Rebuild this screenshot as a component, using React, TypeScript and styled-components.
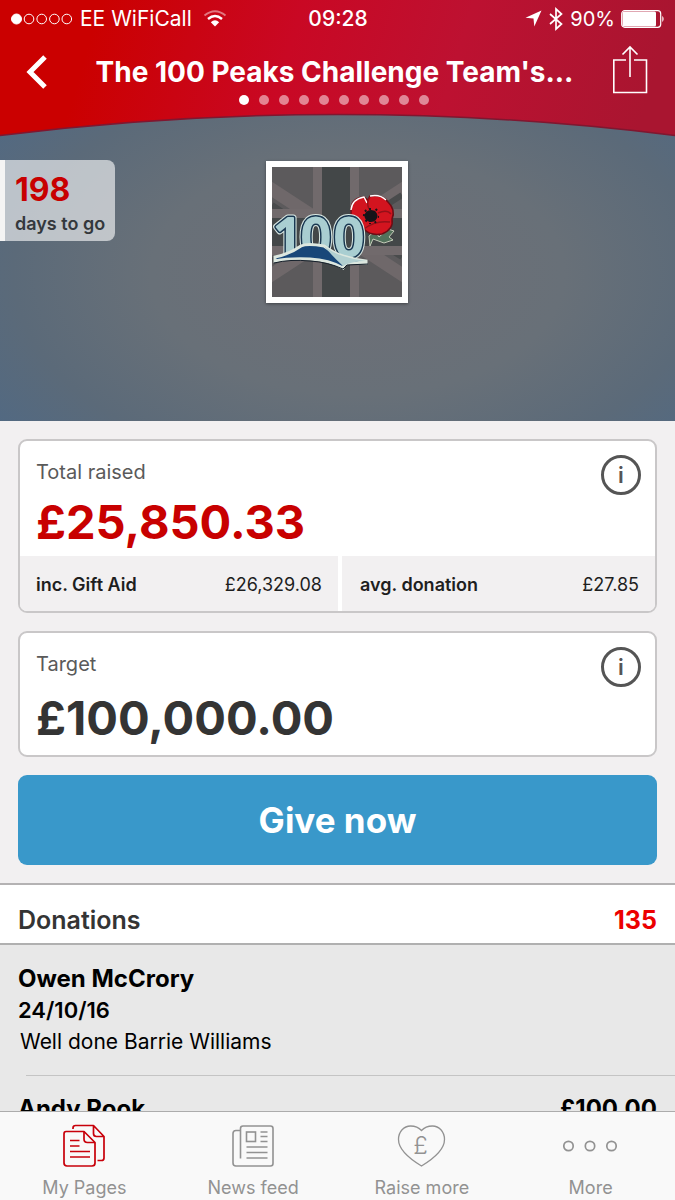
import React from "react";
import styled, { createGlobalStyle } from "styled-components";

const GlobalStyle = createGlobalStyle`
  *, *::before, *::after { box-sizing: border-box; }
  body {
    margin: 0;
    background: #f2f0f1;
    font-family: Inter, "Open Sans", sans-serif;
    color: #1e1e1e;
  }
  button { font-family: inherit; cursor: pointer; padding: 0; border: 0; background: none; color: inherit; }
  h1, h2, h3, p, ul, dl, dd { margin: 0; padding: 0; }
  svg { display: block; flex: none; }
`;

const Screen = styled.div`
  height: 100vh;
  display: flex;
  flex-direction: column;
  overflow: hidden;
`;

const Header = styled.header`
  position: relative;
  z-index: 1;
  flex: none;
  height: 114px;
  color: #fff;
`;

const HeaderShape = styled.svg`
  position: absolute;
  top: 0;
  left: 0;
  width: 100%;
  height: 138px;
  z-index: -1;
`;

const StatusBar = styled.div`
  display: grid;
  grid-template-columns: 1fr auto 1fr;
  align-items: center;
  height: 37px;
  padding: 0 10px 0 11px;
  font-size: 20px;
  line-height: 24px;
`;

const StatusGroup = styled.div<{ $end?: boolean }>`
  display: flex;
  align-items: center;
  justify-content: ${(p) => (p.$end ? "flex-end" : "flex-start")};
  gap: ${(p) => (p.$end ? "6px" : "8px")};
`;

const Carrier = styled.span`
  font-size: 21px;
  margin-right: 3px;
`;

const Clock = styled.time`
  font-size: 21px;
  font-weight: 500;
`;

const TitleRow = styled.div`
  display: grid;
  grid-template-columns: 36px 1fr 36px;
  align-items: center;
  height: 58px;
  padding: 12px 26px 0 20px;
`;

const IconButton = styled.button`
  display: flex;
  align-items: center;
  justify-content: center;
  height: 46px;
`;

const Title = styled.h1`
  font-size: 28px;
  line-height: 36px;
  font-weight: 700;
  text-align: center;
  white-space: nowrap;
`;

const Pager = styled.div`
  display: flex;
  justify-content: center;
  gap: 10px;
  padding-right: 8px;
`;

const Dot = styled.span<{ $on: boolean }>`
  width: 10px;
  height: 10px;
  border-radius: 50%;
  background: ${(p) => (p.$on ? "#fff" : "rgba(255,255,255,0.5)")};
`;

const Scroller = styled.main`
  flex: 1;
  min-height: 0;
  overflow-y: auto;
  scrollbar-width: none;
`;

const Hero = styled.section`
  display: grid;
  grid-template-columns: 1fr auto 1fr;
  align-items: start;
  height: 307px;
  padding: 46px 2px 0 0;
  background: radial-gradient(ellipse 68% 88% at 53% 52%, #6e6f76 0%, #687078 45%, #5b6a79 75%, #506984 100%);
`;

const DaysLeft = styled.div`
  justify-self: start;
  width: 115px;
  height: 81px;
  padding: 12px 0 0 10px;
  border-left: 5px solid #f4f4f4;
  border-radius: 0 8px 8px 0;
  background: rgba(255, 255, 255, 0.6);
  background-clip: padding-box;
  color: #34383c;
  font-size: 18px;
  line-height: 24px;
  font-weight: 600;
  white-space: nowrap;
`;

const DaysCount = styled.strong`
  display: block;
  color: #c80000;
  font-size: 32px;
  line-height: 36px;
  margin-bottom: 4px;
  font-weight: 700;
`;

const Poster = styled.figure`
  margin: 1px 0 0;
  border: 6px solid #fff;
  box-shadow: 0 1px 3px rgba(0, 0, 0, 0.4);
`;

const Cards = styled.section`
  display: flex;
  flex-direction: column;
  gap: 18px;
  padding: 18px;
`;

const Card = styled.article`
  border: 2px solid #c9c7c8;
  border-radius: 9px;
  background: #fff;
  overflow: hidden;
`;

const CardTop = styled.div<{ $tall?: boolean }>`
  display: flex;
  justify-content: space-between;
  align-items: flex-start;
  height: ${(p) => (p.$tall ? "122px" : "115px")};
  padding: 14px 14px 0 16px;
`;

const Label = styled.h2`
  font-size: 20px;
  line-height: 34px;
  font-weight: 400;
  color: #5a5a5a;
`;

const Amount = styled.p<{ $red?: boolean }>`
  margin-top: ${(p) => (p.$red ? "5px" : "9px")};
  font-size: 47px;
  line-height: 56px;
  font-weight: 700;
  color: ${(p) => (p.$red ? "#c80000" : "#343434")};
`;

const InfoButton = styled.button`
  width: 40px;
  height: 40px;
  border: 3px solid #555;
  border-radius: 50%;
  color: #555;
  font-size: 22px;
  line-height: 34px;
  font-weight: 600;
`;

const Stats = styled.dl`
  display: grid;
  grid-template-columns: 318fr 313fr;
  gap: 4px;
`;

const Stat = styled.div`
  display: flex;
  justify-content: space-between;
  align-items: center;
  height: 55px;
  padding: 2px 16px 0;
  background: #f2f0f1;
  font-size: 18px;
  line-height: 24px;
  dt { font-weight: 600; }
  & + & { padding-left: 18px; }
`;

const GiveButton = styled.button`
  height: 90px;
  border-radius: 9px;
  background: #3998ca;
  color: #fff;
  font-size: 35px;
  line-height: 40px;
  font-weight: 700;
`;

const SectionHead = styled.div`
  display: flex;
  justify-content: space-between;
  align-items: center;
  height: 62px;
  padding: 12px 18px 0;
  border-top: 2px solid #b4b2b3;
  border-bottom: 2px solid #b0b0b0;
  background: #fff;
  font-size: 25px;
  line-height: 32px;
  color: #343434;
  h2 { font-size: inherit; font-weight: 600; }
`;

const Count = styled.strong`
  color: #ec0000;
  font-weight: 700;
`;

const DonationList = styled.ul`
  list-style: none;
  background: #e8e8e8;
  color: #000;
`;

const Donation = styled.li`
  padding: 17px 18px;
  & + &::before {
    content: "";
    display: block;
    height: 1px;
    margin: -17px -18px 16px 8px;
    background: #c4c4c4;
  }
`;

const DonorRow = styled.div`
  display: flex;
  justify-content: space-between;
  font-size: 24px;
  line-height: 34px;
  font-weight: 700;
  h3 { font-size: inherit; font-weight: inherit; }
`;

const DonationDate = styled.time`
  display: block;
  font-size: 22px;
  line-height: 28px;
  font-weight: 600;
`;

const Message = styled.p`
  padding: 2px 0 0 2px;
  font-size: 21px;
  line-height: 32px;
`;

const TabBar = styled.nav`
  flex: none;
  display: grid;
  grid-template-columns: repeat(4, 1fr);
  height: 89px;
  border-top: 1px solid #acacac;
  background: #f9f9f9;
`;

const Tab = styled.a<{ $active?: boolean }>`
  display: flex;
  flex-direction: column;
  align-items: center;
  gap: 8px;
  padding-top: 12px;
  color: #929292;
  font-size: 18px;
  line-height: 24px;
  text-decoration: none;
  svg { color: ${(p) => (p.$active ? "#c8000a" : "#929292")}; }
`;

const SignalIcon = () => (
  <svg width="61" height="12" viewBox="0 0 61 12" fill="none" stroke="#fff" aria-hidden="true">
    <circle cx="5.5" cy="6" r="5" fill="#fff" />
    {[18, 30.7, 43.4, 55.8].map((x) => (
      <circle key={x} cx={x} cy="6" r="4.8" strokeWidth="1" />
    ))}
  </svg>
);

const WifiIcon = () => (
  <svg width="24" height="17" viewBox="0 0 24 17" fill="none" stroke="#fff" aria-hidden="true">
    <path d="M1.5 5.5Q12-3 22.500 5.500" strokeWidth="2" opacity="0.45" />
    <path d="M5 9Q12 3.200 19 9" strokeWidth="2.400" />
    <path d="M7.800 12.200Q12 8.500 16.200 12.200L12 16.500Z" fill="#fff" stroke="none" />
  </svg>
);

const LocationIcon = () => (
  <svg width="17" height="17" viewBox="0 0 17 17" fill="#fff" aria-hidden="true">
    <path d="M16.500 .5L9.300 16.500L8.500 8.500L.5 7.700Z" />
  </svg>
);

const BluetoothIcon = () => (
  <svg width="16" height="24" viewBox="0 0 16 24" fill="none" stroke="#fff" strokeWidth="1.700" aria-hidden="true">
    <path d="M2 7L13.500 17L8 22V2L13.500 7L2 17" />
  </svg>
);

const BatteryIcon = () => (
  <svg width="44" height="18" viewBox="0 0 44 18" fill="none" aria-hidden="true">
    <rect x=".7" y=".7" width="39" height="16.600" rx="3" stroke="#fff" strokeWidth="1.200" />
    <rect x="1.500" y="1.500" width="33.500" height="15" rx="1.500" fill="#fff" />
    <path d="M41.300 5.800Q44 9 41.300 12.200Z" fill="#fff" />
  </svg>
);

const BackIcon = () => (
  <svg width="24" height="36" viewBox="0 0 24 36" fill="none" stroke="#fff" strokeWidth="5" aria-hidden="true">
    <path d="M19 3L4 18L19 33" />
  </svg>
);

const ShareIcon = () => (
  <svg width="36" height="54" viewBox="0 0 36 54" fill="none" stroke="#fff" strokeWidth="1.600" aria-hidden="true">
    <path d="M13 15H.8V47.500H33.500V15H21" />
    <path d="M17 32V2M9.500 9.500L17 2L24.500 9.500" />
  </svg>
);

const PagesIcon = () => (
  <svg width="44" height="44" viewBox="0 0 44 44" fill="none" stroke="currentColor" strokeWidth="1.700" strokeLinejoin="round" aria-hidden="true">
    <path d="M4 7.500H22L33 18.500V39Q33 42 30 42H5Q2 42 2 39V10Q2 7.500 4 7.500Z" />
    <path d="M22 7.500V15Q22 18.500 25.500 18.500H33" />
    <path d="M11 5V4Q11 1.500 13.500 1.500H31.500L42 12.500V34Q42 36.500 39.500 36.500H35.500M31.500 1.500V9.500Q31.500 12.500 34.500 12.500H42" />
    <path d="M8 16.500H17.500M8 22H17.500M8 27.500H28M8 33H28" />
  </svg>
);

const NewsIcon = () => (
  <svg width="44" height="44" viewBox="0 0 44 44" fill="none" stroke="currentColor" strokeWidth="1.600" aria-hidden="true">
    <path d="M9.500 34.500V4.500Q9.500 2 12 2H39.500Q42 2 42 4.500V39.500Q42 42 39.500 42H5Q2 42 2 39V9.500Q2 6.500 5 6.500H9.500" />
    <rect x="15.500" y="8" width="9" height="9.500" />
    <path d="M29.500 8H36.500M29.500 12.500H36.500M29.500 17.500H36.500M15.500 23H36.500M15.500 28.500H36.500M15.500 34H36.500" />
  </svg>
);

const HeartIcon = () => (
  <svg width="50" height="44" viewBox="0 0 50 44" fill="none" stroke="currentColor" strokeWidth="1.300" aria-hidden="true">
    <path d="M24.500 42Q1.500 28 1.500 15.500C1.500 7.500 7 2 13.500 2Q20.500 2 24.500 6.500Q28.500 2 35.500 2C42 2 47.500 7.500 47.500 15.500Q47.500 28 24.500 42Z" />
    <text x="23.500" y="30" textAnchor="middle" fontSize="24" fontWeight="300" fill="currentColor" stroke="none">£</text>
  </svg>
);

const MoreIcon = () => (
  <svg width="56" height="44" viewBox="0 0 56 44" fill="none" stroke="currentColor" strokeWidth="1.700" aria-hidden="true">
    <circle cx="5.500" cy="22" r="4.700" />
    <circle cx="27" cy="22" r="4.700" />
    <circle cx="48.500" cy="22" r="4.700" />
  </svg>
);

const logoDigits = {
  y: 89,
  textAnchor: "middle" as const,
  fontFamily: '"Open Sans", sans-serif',
  fontSize: 53,
  fontWeight: 600,
  strokeLinejoin: "round" as const,
};

const LogoDigit = ({ x, children }: { x: number; children: string }) => (
  <g>
    <text {...logoDigits} x={x} fill="#d9e8e3" stroke="#d9e8e3" strokeWidth="7">{children}</text>
    <text {...logoDigits} x={x} fill="#183650" stroke="#183650" strokeWidth="5">{children}</text>
    <text {...logoDigits} x={x} fill="#a9ced1" stroke="#a9ced1" strokeWidth="2">{children}</text>
  </g>
);

const TeamLogo = () => (
  <svg width="130" height="130" viewBox="0 0 130 130" role="img" aria-label="100 Peaks Challenge">
    <rect width="130" height="130" fill="#5c5a5c" />
    <path d="M-4 20L134 110M134 20L-4 110" stroke="#6f686a" strokeWidth="13" />
    <path d="M0 38L40 65M130 28L90 54M0 94L40 68M130 90L85 62" stroke="#494b4c" strokeWidth="6" />
    <path d="M0 65H130M64 0V130" stroke="#716a6c" strokeWidth="46" />
    <path d="M0 65H130M64 0V130" stroke="#434748" strokeWidth="28" />
    <path d="M97 69L103 64L107 70L116 62L122 64L117 70L121 73L112 76L101 72L98 79Z" fill="#52715b" stroke="#c4cbb8" strokeWidth="1" />
    <path d="M79 43Q79 31 92 30L96 33L98 29Q110 27 116 35Q124 43 120 52Q122 62 110 67Q98 69 92 62Q78 60 79 43Z" fill="#d3141f" stroke="#6b0d15" strokeWidth="1.500" />
    <path d="M79 43Q80 32 92 30L95 36M98 29Q108 27 114 33" fill="none" stroke="#fff" strokeWidth="1.400" />
    <path d="M92 62Q103 53 118 55M106 46Q115 42 119 47M97 42Q94 35 98 30" fill="none" stroke="#941018" strokeWidth="1.500" />
    <ellipse cx="99" cy="49" rx="6.500" ry="6" fill="#171419" />
    <path d="M91 48L107 50M98 41V57M93 43L104 56M105 42L93 55" stroke="#171419" strokeWidth="2" strokeDasharray="2 1" />
    <LogoDigit x={16}>1</LogoDigit>
    <LogoDigit x={44}>0</LogoDigit>
    <LogoDigit x={77}>0</LogoDigit>
    <path d="M3 90Q18 87 29 79Q35 76 52 79Q61 86 71 89Q83 93 94 94L94 96Q80 95 73 97L71 101Q57 93 38 92Q17 91 3 94Z" fill="#184779" stroke="#dce7df" strokeWidth="3" />
    <path d="M52 79Q61 86 71 89Q83 93 94 94Q80 94 71 99Q62 91 52 79Z" fill="#b2d0d1" />
    <path d="M2 96Q18 92 38 94Q56 95 71 102L75 98L96 97" fill="none" stroke="#15202b" strokeWidth="1" />
  </svg>
);

const donations = [
  { name: "Owen McCrory", date: "24/10/16", message: "Well done Barrie Williams", amount: "" },
  { name: "Andy Rook", date: "", message: "", amount: "£100.00" },
];

const tabs = [
  { label: "My Pages", Icon: PagesIcon },
  { label: "News feed", Icon: NewsIcon },
  { label: "Raise more", Icon: HeartIcon },
  { label: "More", Icon: MoreIcon },
];

export default function App() {
  return (
    <Screen>
      <GlobalStyle />
      <Header>
        <HeaderShape viewBox="0 0 675 138" preserveAspectRatio="none" aria-hidden="true">
          <defs>
            <linearGradient id="headerFill" x1="0" y1="0" x2="1" y2="0.060">
              <stop offset="0.150" stopColor="#cb0000" />
              <stop offset="0.450" stopColor="#c90824" />
              <stop offset="0.700" stopColor="#bd1131" />
              <stop offset="1" stopColor="#a91530" />
            </linearGradient>
          </defs>
          <path d="M0 0H675V135.500Q337.500 93.500 0 135.500Z" fill="url(#headerFill)" />
          <path d="M0 135.500Q337.500 93.500 675 135.500" fill="none" stroke="#7f1730" strokeWidth="1.500" />
        </HeaderShape>
        <StatusBar>
          <StatusGroup>
            <SignalIcon />
            <Carrier>EE WiFiCall</Carrier>
            <WifiIcon />
          </StatusGroup>
          <Clock>09:28</Clock>
          <StatusGroup $end>
            <LocationIcon />
            <BluetoothIcon />
            <span>90%</span>
            <BatteryIcon />
          </StatusGroup>
        </StatusBar>
        <TitleRow>
          <IconButton type="button" aria-label="Back"><BackIcon /></IconButton>
          <Title>The 100 Peaks Challenge Team's...</Title>
          <IconButton type="button" aria-label="Share"><ShareIcon /></IconButton>
        </TitleRow>
        <Pager aria-hidden="true">
          {Array.from({ length: 10 }, (_, i) => <Dot key={i} $on={i === 0} />)}
        </Pager>
      </Header>

      <Scroller>
        <Hero>
          <DaysLeft><DaysCount>198</DaysCount>days to go</DaysLeft>
          <Poster><TeamLogo /></Poster>
        </Hero>

        <Cards>
          <Card>
            <CardTop>
              <div>
                <Label>Total raised</Label>
                <Amount $red>£25,850.33</Amount>
              </div>
              <InfoButton type="button" aria-label="About total raised">i</InfoButton>
            </CardTop>
            <Stats>
              <Stat><dt>inc. Gift Aid</dt><dd>£26,329.08</dd></Stat>
              <Stat><dt>avg. donation</dt><dd>£27.85</dd></Stat>
            </Stats>
          </Card>
          <Card>
            <CardTop $tall>
              <div>
                <Label>Target</Label>
                <Amount>£100,000.00</Amount>
              </div>
              <InfoButton type="button" aria-label="About target">i</InfoButton>
            </CardTop>
          </Card>
          <GiveButton type="button">Give now</GiveButton>
        </Cards>

        <SectionHead>
          <h2>Donations</h2>
          <Count>135</Count>
        </SectionHead>
        <DonationList>
          {donations.map((d) => (
            <Donation key={d.name}>
              <DonorRow><h3>{d.name}</h3><span>{d.amount}</span></DonorRow>
              {d.date && <DonationDate>{d.date}</DonationDate>}
              {d.message && <Message>{d.message}</Message>}
            </Donation>
          ))}
        </DonationList>
      </Scroller>

      <TabBar>
        {tabs.map(({ label, Icon }, i) => (
          <Tab key={label} href="#" $active={i === 0} aria-current={i === 0 ? "page" : undefined}>
            <Icon />
            {label}
          </Tab>
        ))}
      </TabBar>
    </Screen>
  );
}
